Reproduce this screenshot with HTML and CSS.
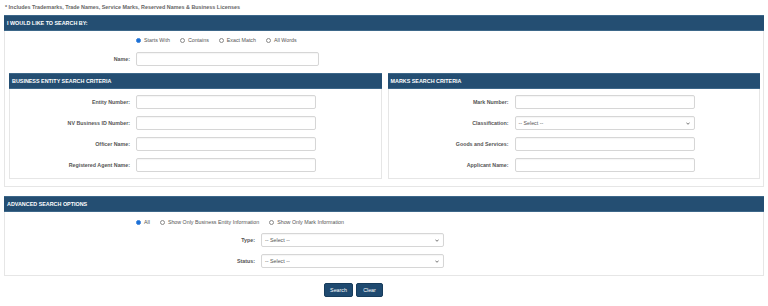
FILE: index.html
```html
<!DOCTYPE html>
<html>
<head>
<meta charset="utf-8">
<link rel="stylesheet" href="styles.css">
</head>
<body>
<div class="note">* Includes Trademarks, Trade Names, Service Marks, Reserved Names &amp; Business Licenses</div>

<div class="panel">
  <div class="head">I WOULD LIKE TO SEARCH BY:</div>
  <div class="panel-body main-body">
    <div class="radios main-radios">
      <span class="opt"><span class="radio on"></span>Starts With</span>
      <span class="opt"><span class="radio"></span>Contains</span>
      <span class="opt"><span class="radio"></span>Exact Match</span>
      <span class="opt"><span class="radio"></span>All Words</span>
    </div>
    <div class="row main-row">
      <label class="lbl">Name:</label>
      <input class="field" type="text">
    </div>
    <div class="subs">
      <div class="sub">
        <div class="head sub-head">BUSINESS ENTITY SEARCH CRITERIA</div>
        <div class="sub-body">
          <div class="row"><label class="lbl">Entity Number:</label><input class="field" type="text"></div>
          <div class="row"><label class="lbl">NV Business ID Number:</label><input class="field" type="text"></div>
          <div class="row"><label class="lbl">Officer Name:</label><input class="field" type="text"></div>
          <div class="row"><label class="lbl">Registered Agent Name:</label><input class="field" type="text"></div>
        </div>
      </div>
      <div class="sub">
        <div class="head sub-head">MARKS SEARCH CRITERIA</div>
        <div class="sub-body">
          <div class="row"><label class="lbl">Mark Number:</label><input class="field" type="text"></div>
          <div class="row"><label class="lbl">Classification:</label>
            <div class="field select"><span>-- Select --</span><svg class="chev" width="4" height="3" viewBox="0 0 4 3"><path d="M0.4 0.6 L2 2.3 L3.6 0.6" fill="none" stroke="#555" stroke-width="0.8"/></svg></div>
          </div>
          <div class="row"><label class="lbl">Goods and Services:</label><input class="field" type="text"></div>
          <div class="row"><label class="lbl">Applicant Name:</label><input class="field" type="text"></div>
        </div>
      </div>
    </div>
  </div>
</div>

<div class="panel adv">
  <div class="head">ADVANCED SEARCH OPTIONS</div>
  <div class="panel-body adv-body">
    <div class="radios adv-radios">
      <span class="opt"><span class="radio on"></span>All</span>
      <span class="opt"><span class="radio"></span>Show Only Business Entity Information</span>
      <span class="opt"><span class="radio"></span>Show Only Mark Information</span>
    </div>
    <div class="row adv-row">
      <label class="lbl">Type:</label>
      <div class="field select"><span>-- Select --</span><svg class="chev" width="4" height="3" viewBox="0 0 4 3"><path d="M0.4 0.6 L2 2.3 L3.6 0.6" fill="none" stroke="#555" stroke-width="0.8"/></svg></div>
    </div>
    <div class="row adv-row">
      <label class="lbl">Status:</label>
      <div class="field select"><span>-- Select --</span><svg class="chev" width="4" height="3" viewBox="0 0 4 3"><path d="M0.4 0.6 L2 2.3 L3.6 0.6" fill="none" stroke="#555" stroke-width="0.8"/></svg></div>
    </div>
  </div>
</div>

<div class="buttons">
  <button class="btn search">Search</button>
  <button class="btn clear">Clear</button>
</div>
</body>
</html>
```

FILE: styles.css
```css
* { box-sizing: border-box; }
html, body { margin: 0; padding: 0; background: #fff; }
body {
  font-family: "Liberation Sans", Arial, sans-serif;
  font-size: 5.3px;
  color: #555;
  width: 768px;
  height: 306px;
  overflow: hidden;
}
.note {
  height: 15px;
  line-height: 15px;
  padding-left: 5px;
  font-weight: bold;
  font-size: 5.4px;
  color: #666;
}
.panel {
  margin: 0 4px 0 4px;
}
.head {
  height: 16px;
  background: #244e72;
  border-top: 1px solid #3d6789;
  border-bottom: 1px solid #3d6789;
  color: #fff;
  font-weight: bold;
  font-size: 5.4px;
  padding-left: 3px;
  line-height: 14px;
}
.panel-body {
  border: 1px solid #e6e6e6;
  border-top: none;
}
.main-body {
  padding: 4px 3px 7px 4px;
}
.radios {
  height: 10px;
  display: flex;
  align-items: center;
}
.main-radios { padding-left: 127px; }
.opt {
  display: inline-flex;
  align-items: center;
  margin-right: 10px;
  color: #555;
}
.radio {
  display: inline-block;
  width: 5px;
  height: 5px;
  border-radius: 50%;
  border: 0.7px solid #8a8a8a;
  margin-right: 3px;
  background: #fff;
}
.radio.on {
  border-color: #1a6fd6;
  background: radial-gradient(circle, #1a6fd6 0 1.4px, #fff 1.6px);
}
.row {
  display: flex;
  align-items: center;
  height: 14px;
}
.lbl {
  font-weight: bold;
  color: #555;
  text-align: right;
  padding-right: 6px;
  flex: none;
  font-size: 5.3px;
}
.field {
  height: 14px;
  width: 180px;
  border: 1px solid #d6d6d6;
  border-radius: 2px;
  background: #fff;
  box-shadow: inset 0 1px 1px rgba(0,0,0,0.04);
  padding: 0;
  margin: 0;
  font: inherit;
  outline: none;
}
.main-row { margin-top: 7px; }
.main-row .lbl { width: 127px; padding-right: 6px; }
.main-row .field { width: 183px; }
.subs {
  display: flex;
  gap: 6px;
  margin-top: 7px;
}
.sub { flex: 1; }
.sub-head { padding-left: 3px; }
.sub-body {
  border: 1px solid #e6e6e6;
  border-top: none;
  padding: 6px 0 6px 0;
  display: flex;
  flex-direction: column;
  gap: 7px;
}
.sub .lbl { width: 126px; }
.sub .field { width: 180px; }
.select {
  display: flex;
  align-items: center;
  justify-content: space-between;
  padding: 0 4px 0 3px;
  color: #555;
  font-weight: normal;
}
.chev { display: block; }
.adv { margin-top: 9px; }
.adv-body {
  padding: 5px 0 7px 0;
}
.adv-radios { padding-left: 131px; }
.adv-row { margin-top: 6px; }
.adv-row + .adv-row { margin-top: 7px; }
.adv-row .lbl { width: 256px; }
.adv-row .field { width: 183px; }
.buttons {
  display: flex;
  gap: 3px;
  margin-top: 7px;
  padding-left: 324px;
}
.btn {
  height: 14px;
  border: 1px solid #173c5c;
  border-radius: 2px;
  background: #1f4a70;
  color: #fff;
  font: inherit;
  font-size: 5.3px;
  padding: 0;
  cursor: pointer;
}
.search { width: 29px; }
.clear { width: 27px; }
```
